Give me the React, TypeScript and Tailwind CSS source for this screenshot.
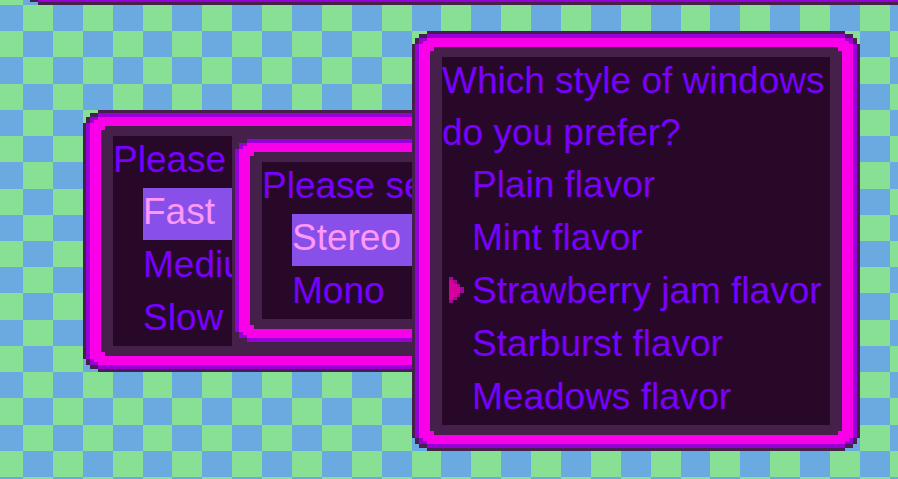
import React from 'react'
import clsx from 'clsx'

// ── Backdrop ─────────────────────────────────────────────────────────────────

const TILE_W = 29.89
const TILE_H = 26.22

// One path with every green tile, starting a tile above and left of the screen.
function checkerPath(cols: number, rows: number): string {
  let d = ''
  for (let r = -1; r < rows; r++) {
    for (let c = -1; c < cols; c++) {
      if ((r + c) % 2 !== 0) continue
      d += `M${23 + c * TILE_W} ${5 + r * TILE_H}h${TILE_W}v${TILE_H}h${-TILE_W}z`
    }
  }
  return d
}

function Checkerboard() {
  return (
    <svg className="absolute inset-0 h-full w-full" shapeRendering="crispEdges" aria-hidden="true">
      <path d={checkerPath(70, 50)} fill="#88e094" />
    </svg>
  )
}

// ── Window frame ─────────────────────────────────────────────────────────────

interface WindowProps {
  className?: string
  contentClass?: string
  label: string
  children?: React.ReactNode
}

// Four nested layers, each with its own stair-stepped corners.
function Window({ className, contentClass, label, children }: WindowProps) {
  return (
    <section
      aria-label={label}
      className={clsx(
        'absolute bg-[#44204a] p-[3px] [clip-path:polygon(15px_0,calc(100%-15px)_0,calc(100%-15px)_3px,calc(100%-7px)_3px,calc(100%-7px)_7px,calc(100%-3px)_7px,calc(100%-3px)_13px,100%_13px,100%_calc(100%-13px),calc(100%-3px)_calc(100%-13px),calc(100%-3px)_calc(100%-7px),calc(100%-7px)_calc(100%-7px),calc(100%-7px)_calc(100%-3px),calc(100%-15px)_calc(100%-3px),calc(100%-15px)_100%,15px_100%,15px_calc(100%-3px),7px_calc(100%-3px),7px_calc(100%-7px),3px_calc(100%-7px),3px_calc(100%-13px),0_calc(100%-13px),0_13px,3px_13px,3px_7px,7px_7px,7px_3px,15px_3px)]',
        className,
      )}
    >
      <div className="bg-[#9800d8] p-1 [clip-path:polygon(12px_0,calc(100%-12px)_0,calc(100%-12px)_4px,calc(100%-4px)_4px,calc(100%-4px)_10px,100%_10px,100%_calc(100%-10px),calc(100%-4px)_calc(100%-10px),calc(100%-4px)_calc(100%-4px),calc(100%-12px)_calc(100%-4px),calc(100%-12px)_100%,12px_100%,12px_calc(100%-4px),4px_calc(100%-4px),4px_calc(100%-10px),0_calc(100%-10px),0_10px,4px_10px,4px_4px,12px_4px)]">
        <div className="bg-[#fa00e8] px-[11px] py-[9px] [clip-path:polygon(8px_0,calc(100%-8px)_0,calc(100%-8px)_3px,calc(100%-4px)_3px,calc(100%-4px)_6px,100%_6px,100%_calc(100%-6px),calc(100%-4px)_calc(100%-6px),calc(100%-4px)_calc(100%-3px),calc(100%-8px)_calc(100%-3px),calc(100%-8px)_100%,8px_100%,8px_calc(100%-3px),4px_calc(100%-3px),4px_calc(100%-6px),0_calc(100%-6px),0_6px,4px_6px,4px_3px,8px_3px)]">
          <div className="bg-[#44204a] px-3 py-2.5 [clip-path:polygon(4px_0,calc(100%-4px)_0,calc(100%-4px)_4px,100%_4px,100%_calc(100%-4px),calc(100%-4px)_calc(100%-4px),calc(100%-4px)_100%,4px_100%,4px_calc(100%-4px),0_calc(100%-4px),0_4px,4px_4px)]">
            <div className={clsx('overflow-hidden bg-[#280828]', contentClass)}>{children}</div>
          </div>
        </div>
      </div>
    </section>
  )
}

// ── Menu parts ───────────────────────────────────────────────────────────────

function Prompt({ children }: { children: React.ReactNode }) {
  return <p className="pb-1 leading-[48px] whitespace-nowrap">{children}</p>
}

function Menu({ children }: { children: React.ReactNode }) {
  return <ul className="flex flex-col gap-px">{children}</ul>
}

function Arrow() {
  return (
    <svg className="h-[26px] w-[15px]" viewBox="0 0 4 8" preserveAspectRatio="none" shapeRendering="crispEdges" aria-hidden="true">
      <path d="M0 0h1v1h1v1h1v1h1v2h-1v1h-1v1h-1v1h-1z" fill="#a00898" />
      <path d="M0 1h1v1h1v1h1v2h-1v1h-1v1h-1z" fill="#d8009c" />
    </svg>
  )
}

interface OptionProps {
  label: string
  highlighted?: boolean
  marked?: boolean
}

function Option({ label, highlighted, marked }: OptionProps) {
  return (
    <li className="flex">
      <span className="flex w-[30px] shrink-0 items-center pb-1.5 pl-[7px]">{marked && <Arrow />}</span>
      <button
        type="button"
        aria-pressed={!!(highlighted || marked)}
        className={clsx(
          'grow pb-1 text-left leading-[48px] whitespace-nowrap',
          highlighted && 'bg-[#8850e8] text-[#ff98f8]',
        )}
      >
        {label}
      </button>
    </li>
  )
}

const FLAVORS = ['Plain flavor', 'Mint flavor', 'Strawberry jam flavor', 'Starburst flavor', 'Meadows flavor']

// ── App ──────────────────────────────────────────────────────────────────────

export default function App() {
  return (
    <main className="relative h-screen overflow-hidden bg-[#6aaae0] font-['Liberation_Sans',sans-serif] text-[37px] text-[#7800ff]">
      <Checkerboard />

      {/* only the lower edge of this one is on screen */}
      <Window label="Battle" className="-top-[95px] -right-10 left-[23px]" contentClass="h-12" />

      <Window label="Text speed" className="top-[110px] left-[83px] w-[400px]" contentClass="w-[119px]">
        <Prompt>Please s</Prompt>
        <Menu>
          <Option label="Fast" highlighted />
          <Option label="Medium" />
          <Option label="Slow" />
        </Menu>
      </Window>

      <Window label="Sound" className="top-[136px] left-[232px] w-[300px]">
        <Prompt>Please select</Prompt>
        <Menu>
          <Option label="Stereo" highlighted />
          <Option label="Mono" />
        </Menu>
      </Window>

      <Window label="Window style" className="top-[31px] left-[412px] w-[448px]">
        <Prompt>Which style of windows</Prompt>
        <Prompt>do you prefer?</Prompt>
        <Menu>
          {FLAVORS.map((name) => (
            <Option key={name} label={name} marked={name === 'Strawberry jam flavor'} />
          ))}
        </Menu>
      </Window>
    </main>
  )
}
